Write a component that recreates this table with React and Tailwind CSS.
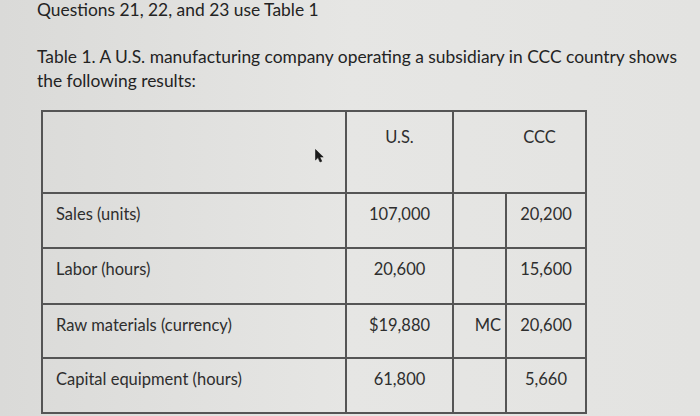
const rows = [
  { label: "Sales (units)", us: "107,000", mid: "", ccc: "20,200", h: "h-[55px]" },
  { label: "Labor (hours)", us: "20,600", mid: "", ccc: "15,600", h: "h-[56px]" },
  { label: "Raw materials (currency)", us: "$19,880", mid: "MC", ccc: "20,600", h: "h-[54px]" },
  { label: "Capital equipment (hours)", us: "61,800", mid: "", ccc: "5,660", h: "h-[55px]" },
];

function Cursor() {
  return (
    <svg width="10" height="14" viewBox="0 0 10 14" className="absolute left-[272px] top-[37px]">
      <path d="M0.5 0.5 L0.5 11 L3 8.6 L5 13 L6.8 12.2 L4.8 8 L8.2 8 Z" fill="#1a1a1a" stroke="#1a1a1a" strokeWidth="0.6" strokeLinejoin="round" />
    </svg>
  );
}

export default function App() {
  return (
    <div className="w-[700px] h-[416px] overflow-hidden bg-linear-to-r from-[#dadad8] via-[#e6e6e4] to-[#e3e3e1] text-[#232323] font-['Lato','Noto_Sans',sans-serif]">
      <div className="pl-[37px]">
        <h1 className="text-[17.4px] leading-[22px] -mt-[1px]">Questions 21, 22, and 23 use Table 1</h1>

        <p className="mt-[24px] text-[17.4px] leading-[24px] w-[650px]">
          Table 1. A U.S. manufacturing company operating a subsidiary in CCC country shows the following results:
        </p>

        <table className="mt-[17px] ml-[4px] border-collapse text-[16.5px] text-[#2e2e2e]">
          <tbody>
            <tr className="h-[82px]">
              <td className="relative w-[304px] border-2 border-[#555] align-top">
                <Cursor />
              </td>
              <td className="w-[107px] border-2 border-[#555] align-top pt-[13px] text-center">U.S.</td>
              <td colSpan={2} className="border-2 border-[#555] align-top pt-[13px] text-center pl-[40px]">CCC</td>
            </tr>
            {rows.map((r) => (
              <tr key={r.label} className={r.h}>
                <td className="border-2 border-[#555] align-top pt-[8px] pl-[13px]">{r.label}</td>
                <td className="border-2 border-[#555] align-top pt-[8px] text-center">{r.us}</td>
                <td className="w-[53px] border-2 border-[#555] align-top pt-[8px] text-right pr-[4px]">{r.mid}</td>
                <td className="w-[80px] border-2 border-[#555] align-top pt-[8px] text-center">{r.ccc}</td>
              </tr>
            ))}
          </tbody>
        </table>
      </div>
    </div>
  );
}
